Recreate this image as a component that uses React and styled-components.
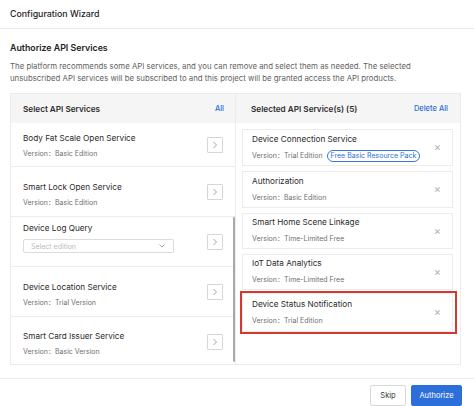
import styled, { createGlobalStyle } from 'styled-components';

const Global = createGlobalStyle`
  * { box-sizing: border-box; }
  body {
    margin: 0;
    background: #fff;
    font-family: Inter, "Noto Sans", "Noto Sans CJK SC", sans-serif;
    color: #262626;
  }
`

const Dialog = styled.div`
  width: 474px;
  height: 406px;
  display: flex;
  flex-direction: column;
  background: #fff;
  overflow: hidden;
  & > * { flex-shrink: 0; }
`

const TitleBar = styled.div`
  height: 29px;
  display: flex;
  align-items: center;
  padding: 0 10px 1px;
  border-bottom: 1px solid #e9e9e9;
  font-size: 8.8px;
  font-weight: 500;
  color: #222;
`

const Body = styled.div`
  padding: 12px 13px 0 10px;
`

const Heading = styled.div`
  font-size: 8.8px;
  font-weight: 600;
  color: #222;
  line-height: 14px;
`

const Desc = styled.p`
  margin: 5px 0 0;
  font-size: 7.8px;
  line-height: 12px;
  color: #5f5f5f;
`

const Panels = styled.div`
  margin-top: 9px;
  height: 272px;
  display: flex;
  border: 1px solid #ebebeb;
`

const Panel = styled.div`
  position: relative;
  width: ${p => p.$w}px;
  display: flex;
  flex-direction: column;
  border-left: ${p => (p.$right ? '1px solid #ebebeb' : 'none')};
  overflow: hidden;
`

const PanelHead = styled.div`
  height: 29px;
  flex-shrink: 0;
  display: flex;
  align-items: center;
  justify-content: space-between;
  padding: 0 ${p => (p.$right ? 12 : 11)}px 0 ${p => (p.$right ? 15 : 12)}px;
  background: #f5f5f5;
  font-size: 8.2px;
  font-weight: 600;
  color: #2e2e2e;
`

const HeadLink = styled.span`
  font-size: 7.5px;
  font-weight: 500;
  color: #2f6fd6;
`

const List = styled.div`
  display: flex;
  flex-direction: column;
`

const Item = styled.div`
  height: ${p => p.$h}px;
  display: flex;
  justify-content: space-between;
  padding: ${p => p.$pt}px 12px 0 12px;
  border-bottom: 1px solid #ececec;
  flex-shrink: 0;
`

const ItemText = styled.div`
  display: flex;
  flex-direction: column;
  align-items: flex-start;
  gap: ${p => p.$gap}px;
`

const Name = styled.div`
  font-size: 8.2px;
  color: #2a2a2a;
  line-height: 11px;
`

const Version = styled.div`
  display: flex;
  align-items: center;
  font-size: 7px;
  color: #6f6f6f;
  line-height: 12px;
`

const SelectBox = styled.div`
  width: 151px;
  height: 14px;
  display: flex;
  align-items: center;
  justify-content: space-between;
  padding: 0 7px 0 7px;
  border: 1px solid #dcdcdc;
  border-radius: 2px;
  font-size: 7px;
  color: #bbb;
`

const ArrowBtn = styled.div`
  align-self: center;
  margin-top: ${p => -p.$pt}px;
  width: 16px;
  height: 16px;
  display: flex;
  align-items: center;
  justify-content: center;
  border: 1px solid #d6d6d6;
  border-radius: 1px;
  background: #fff;
`

const ScrollThumb = styled.div`
  position: absolute;
  right: 0;
  top: 123px;
  width: 2px;
  height: 145px;
  background: #a8a8a8;
  border-radius: 1px;
`

const Cards = styled.div`
  display: flex;
  flex-direction: column;
  gap: 5px;
  padding: 6px 7px 0 6px;
`

const Card = styled.div`
  height: ${p => p.$h || 36}px;
  display: flex;
  align-items: center;
  justify-content: space-between;
  padding: 0 11px 0 9px;
  border: 1px solid #ececec;
  background: #fff;
`

const Highlight = styled.div`
  margin: -4px -4px 0 -2px;
  padding: 0 2px 0 0;
  border: 2px solid #d23a2f;
`

const Tag = styled.span`
  margin-left: 4px;
  padding: 0 3px;
  height: 12px;
  display: inline-flex;
  align-items: center;
  border: 1px solid #3a78dc;
  border-radius: 7px;
  color: #2f6fd6;
  font-size: 7px;
`

const Close = styled.span`
  font-size: 11px;
  color: #b0b0b0;
  line-height: 1;
`

const Footer = styled.div`
  height: 28px;
  margin-top: 13px;
  border-top: 1px solid #ececec;
  display: flex;
  justify-content: flex-end;
  align-items: center;
  gap: 5px;
  padding: 5px 12px 0 0;
`

const Button = styled.button`
  height: 21px;
  width: ${p => (p.$primary ? 51 : 36)}px;
  padding: 0;
  font-family: inherit;
  font-size: 7.5px;
  border-radius: 2px;
  border: 1px solid ${p => (p.$primary ? '#2d6fda' : '#d9d9d9')};
  background: ${p => (p.$primary ? '#2d6fda' : '#fff')};
  color: ${p => (p.$primary ? '#fff' : '#333')};
`

const Chevron = ({ dir = 'right' }) => (
  <svg width="8" height="8" viewBox="0 0 8 8" fill="none" stroke="#999" strokeWidth="0.9">
    {dir === 'right' ? <path d="M2.5 1 L5.5 4 L2.5 7" /> : <path d="M1.5 2.5 L4 5 L6.5 2.5" />}
  </svg>
)

const available = [
  { name: 'Body Fat Scale Open Service', version: 'Basic Edition', h: 44, pt: 10 },
  { name: 'Smart Lock Open Service', version: 'Basic Edition', h: 50, pt: 15 },
  { name: 'Device Log Query', select: true, h: 50, pt: 6 },
  { name: 'Device Location Service', version: 'Trial Version', h: 50, pt: 15 },
  { name: 'Smart Card Issuer Service', version: 'Basic Version', h: 50, pt: 14 },
]

const selected = [
  { name: 'Device Connection Service', version: 'Trial Edition', tag: 'Free Basic Resource Pack', h: 37 },
  { name: 'Authorization', version: 'Basic Edition', h: 37 },
  { name: 'Smart Home Scene Linkage', version: 'Time-Limited Free' },
  { name: 'IoT Data Analytics', version: 'Time-Limited Free' },
  { name: 'Device Status Notification', version: 'Trial Edition', mark: true, h: 39 },
]

function SelectedCard({ item }) {
  return (
    <Card $h={item.h}>
      <ItemText $gap={5}>
        <Name>{item.name}</Name>
        <Version>
          Version：{item.version}
          {item.tag && <Tag>{item.tag}</Tag>}
        </Version>
      </ItemText>
      <Close>×</Close>
    </Card>
  )
}

export default function App() {
  return (
    <Dialog>
      <Global />
      <TitleBar>Configuration Wizard</TitleBar>
      <Body>
        <Heading>Authorize API Services</Heading>
        <Desc>
          The platform recommends some API services, and you can remove and select them as needed. The selected
          unsubscribed API services will be subscribed to and this project will be granted access the API products.
        </Desc>
        <Panels>
          <Panel $w={224}>
            <PanelHead>
              Select API Services
              <HeadLink>All</HeadLink>
            </PanelHead>
            <List>
              {available.map(item => (
                <Item key={item.name} $h={item.h} $pt={item.pt}>
                  <ItemText $gap={item.select ? 5 : 4}>
                    <Name>{item.name}</Name>
                    {item.select ? (
                      <SelectBox>
                        Select edition
                        <Chevron dir="down" />
                      </SelectBox>
                    ) : (
                      <Version>Version：{item.version}</Version>
                    )}
                  </ItemText>
                  <ArrowBtn $pt={item.pt}>
                    <Chevron />
                  </ArrowBtn>
                </Item>
              ))}
            </List>
            <ScrollThumb />
          </Panel>
          <Panel $w={225} $right>
            <PanelHead $right>
              Selected API Service(s) (5)
              <HeadLink>Delete All</HeadLink>
            </PanelHead>
            <Cards>
              {selected.map(item =>
                item.mark ? (
                  <Highlight key={item.name}>
                    <SelectedCard item={item} />
                  </Highlight>
                ) : (
                  <SelectedCard key={item.name} item={item} />
                )
              )}
            </Cards>
          </Panel>
        </Panels>
      </Body>
      <Footer>
        <Button>Skip</Button>
        <Button $primary>Authorize</Button>
      </Footer>
    </Dialog>
  )
}
